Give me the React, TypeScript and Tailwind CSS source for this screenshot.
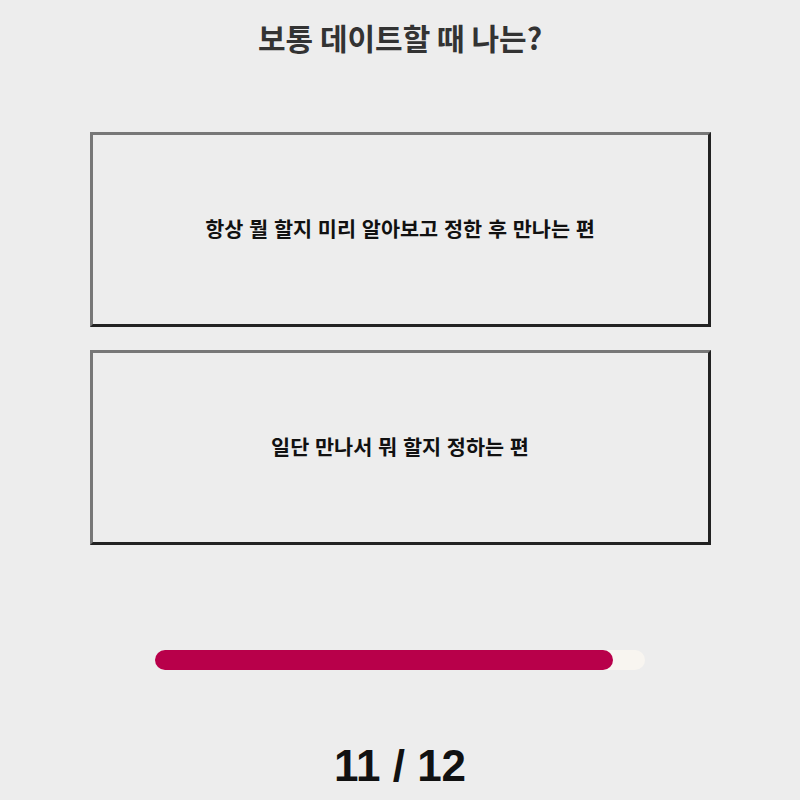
import React from 'react';

const options = [
  '항상 뭘 할지 미리 알아보고 정한 후 만나는 편',
  '일단 만나서 뭐 할지 정하는 편',
];

export default function App() {
  const current = 11;
  const total = 12;

  return (
    <div
      className="w-[800px] h-[800px] bg-[#ededed] flex flex-col items-center overflow-hidden"
      style={{ fontFamily: '"Liberation Sans", "Noto Sans CJK KR", sans-serif' }}
    >
      {/* question */}
      <h1
        className="mt-[16px] h-[42px] leading-[42px] text-[30px] font-bold text-[#333333]"
        style={{ fontFamily: '"Noto Sans CJK KR", sans-serif' }}
      >
        보통 데이트할 때 나는?
      </h1>

      {/* answer buttons */}
      <div className="mt-[74px] flex flex-col gap-[23px]">
        {options.map((text) => (
          <button
            key={text}
            className="w-[621px] h-[195px] border-[3px] border-t-[#777777] border-l-[#777777] border-b-[#222222] border-r-[#222222] bg-[#ededed] flex items-center justify-center text-[20.75px] font-bold text-[#111111]"
          >
            {text}
          </button>
        ))}
      </div>

      {/* progress */}
      <div className="mt-[105px] w-[490px] h-[20px] rounded-full bg-[#f8f5f0]">
        <div className="h-full w-[458px] rounded-full bg-[#b8004a]" />
      </div>

      <div className="mt-[66px] text-[44px] leading-[60px] font-bold text-[#111111]">
        {current} / {total}
      </div>
    </div>
  );
}
